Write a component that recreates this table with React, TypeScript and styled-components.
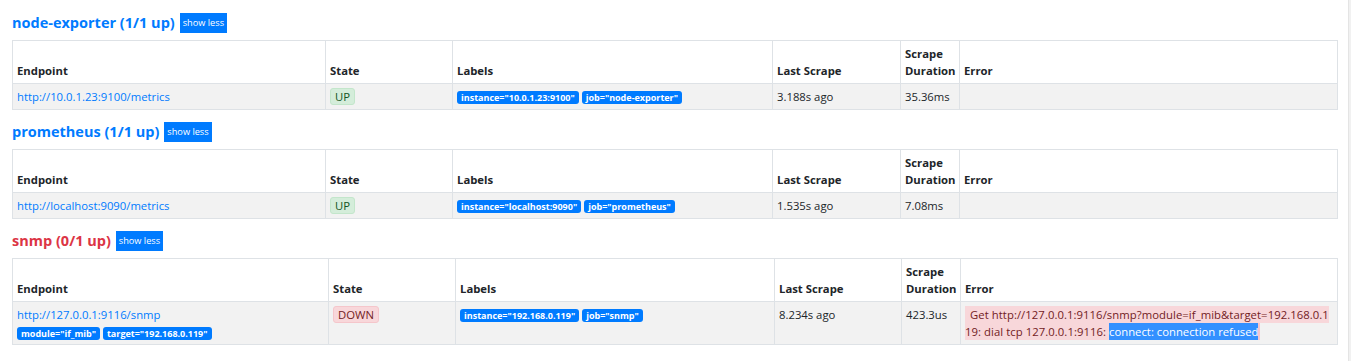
import React from 'react';
import styled, { createGlobalStyle } from 'styled-components';

const GlobalStyle = createGlobalStyle`
  html, body {
    margin: 0;
    padding: 0;
    background: #fff;
  }
  body {
    font-family: 'Open Sans', 'Noto Sans', sans-serif;
    font-size: 11.3px;
    line-height: 17px;
    color: #212529;
  }
`;

interface Target {
  endpoint: string;
  endpointLabels?: string[];
  state: 'UP' | 'DOWN';
  labels: string[];
  lastScrape: string;
  duration: string;
  error?: { text: string; selected: string };
}

interface Pool {
  name: string;
  up: number;
  total: number;
  widths: number[];
  targets: Target[];
}

const pools: Pool[] = [
  {
    name: 'node-exporter',
    up: 1,
    total: 1,
    widths: [313, 127, 320, 128, 59],
    targets: [
      {
        endpoint: 'http://10.0.1.23:9100/metrics',
        state: 'UP',
        labels: ['instance="10.0.1.23:9100"', 'job="node-exporter"'],
        lastScrape: '3.188s ago',
        duration: '35.36ms',
      },
    ],
  },
  {
    name: 'prometheus',
    up: 1,
    total: 1,
    widths: [313, 127, 320, 128, 59],
    targets: [
      {
        endpoint: 'http://localhost:9090/metrics',
        state: 'UP',
        labels: ['instance="localhost:9090"', 'job="prometheus"'],
        lastScrape: '1.535s ago',
        duration: '7.08ms',
      },
    ],
  },
  {
    name: 'snmp',
    up: 0,
    total: 1,
    widths: [316, 127, 319, 127, 59],
    targets: [
      {
        endpoint: 'http://127.0.0.1:9116/snmp',
        endpointLabels: ['module="if_mib"', 'target="192.168.0.119"'],
        state: 'DOWN',
        labels: ['instance="192.168.0.119"', 'job="snmp"'],
        lastScrape: '8.234s ago',
        duration: '423.3us',
        error: {
          text: 'Get http://127.0.0.1:9116/snmp?module=if_mib&target=192.168.0.119: dial tcp 127.0.0.1:9116: ',
          selected: 'connect: connection refused',
        },
      },
    ],
  },
];

const Page = styled.div`
  display: flex;
  min-height: 100vh;
`;

const Content = styled.main`
  flex: 1;
  padding: 13px 10px 0 12px;
`;

const ScrollStrip = styled.div`
  width: 2px;
  background: #f1f1f1;
  border-left: 1px solid #e4e4e4;
`;

const Section = styled.section`
  margin-bottom: 12px;
`;

const PoolHeader = styled.div`
  display: flex;
  align-items: center;
  gap: 5px;
  height: 20px;
  margin-bottom: 7px;
`;

const PoolTitle = styled.h2<{ $down: boolean }>`
  margin: 0;
  font-size: 14.5px;
  font-weight: 700;
  line-height: 20px;
  color: ${p => (p.$down ? '#dc3545' : '#007bff')};
`;

const ToggleButton = styled.button`
  height: 20px;
  padding: 0 3px;
  border: none;
  border-radius: 0;
  background: #007bff;
  color: #fff;
  font-family: inherit;
  font-size: 9.2px;
  line-height: 20px;
  cursor: pointer;
`;

const Table = styled.table`
  width: 100%;
  table-layout: fixed;
  border-collapse: collapse;
  border: 1px solid #dee2e6;
`;

const Th = styled.th`
  padding: 4px;
  text-align: left;
  vertical-align: bottom;
  font-weight: 700;
  border: 1px solid #dee2e6;
`;

const Row = styled.tr`
  background: #f2f2f2;
`;

const Td = styled.td`
  padding: 4px;
  vertical-align: top;
  border: 1px solid #dee2e6;
`;

const EndpointLink = styled.a`
  display: block;
  color: #007bff;
  text-decoration: none;
`;

const LabelList = styled.div<{ $offset: number }>`
  display: flex;
  flex-wrap: wrap;
  gap: 3px;
  padding-top: ${p => p.$offset}px;
`;

const Label = styled.span`
  display: inline-block;
  padding: 1px 4px;
  border-radius: 3px;
  background: #007bff;
  color: #fff;
  font-size: 9px;
  font-weight: 700;
  line-height: 11px;
  white-space: nowrap;
`;

const StateBadge = styled.span<{ $up: boolean }>`
  display: inline-block;
  padding: 0 4px;
  border-radius: 3px;
  line-height: 15px;
  border: 1px solid ${p => (p.$up ? '#c3e6cb' : '#f5c6cb')};
  background: ${p => (p.$up ? '#d4edda' : '#f8d7da')};
  color: ${p => (p.$up ? '#155724' : '#721c24')};
`;

const ErrorText = styled.span`
  padding: 1px 0 1px 5px;
  background: #f8d7da;
  color: #721c24;
  letter-spacing: 0.06px;
  word-break: break-all;
`;

const Selected = styled.span`
  padding: 1px 0;
  background: #3390ff;
  color: #fff;
`;

const ErrorEnd = styled.span`
  display: inline-block;
  width: 2px;
  height: 17px;
  vertical-align: top;
  background: #f5c6cb;
`;

const TargetRow: React.FC<{ target: Target }> = ({ target }) => (
  <Row>
    <Td>
      <EndpointLink href={target.endpoint}>{target.endpoint}</EndpointLink>
      {target.endpointLabels && (
        <LabelList $offset={4}>
          {target.endpointLabels.map(l => (
            <Label key={l}>{l}</Label>
          ))}
        </LabelList>
      )}
    </Td>
    <Td>
      <StateBadge $up={target.state === 'UP'}>{target.state}</StateBadge>
    </Td>
    <Td>
      <LabelList $offset={3}>
        {target.labels.map(l => (
          <Label key={l}>{l}</Label>
        ))}
      </LabelList>
    </Td>
    <Td>{target.lastScrape}</Td>
    <Td>{target.duration}</Td>
    <Td>
      {target.error && (
        <>
          <ErrorText>{target.error.text}</ErrorText>
          <Selected>{target.error.selected}</Selected>
          <ErrorEnd />
        </>
      )}
    </Td>
  </Row>
);

const PoolSection: React.FC<{ pool: Pool }> = ({ pool }) => (
  <Section>
    <PoolHeader>
      <PoolTitle $down={pool.up < pool.total}>
        {pool.name} ({pool.up}/{pool.total} up)
      </PoolTitle>
      <ToggleButton>show less</ToggleButton>
    </PoolHeader>
    <Table>
      <colgroup>
        {pool.widths.map((w, i) => (
          <col key={i} style={{ width: w }} />
        ))}
        <col />
      </colgroup>
      <thead>
        <tr>
          <Th>Endpoint</Th>
          <Th>State</Th>
          <Th>Labels</Th>
          <Th>Last Scrape</Th>
          <Th>Scrape Duration</Th>
          <Th>Error</Th>
        </tr>
      </thead>
      <tbody>
        {pool.targets.map(t => (
          <TargetRow key={t.endpoint} target={t} />
        ))}
      </tbody>
    </Table>
  </Section>
);

export default function App() {
  return (
    <Page>
      <GlobalStyle />
      <Content>
        {pools.map(p => (
          <PoolSection key={p.name} pool={p} />
        ))}
      </Content>
      <ScrollStrip />
    </Page>
  );
}
